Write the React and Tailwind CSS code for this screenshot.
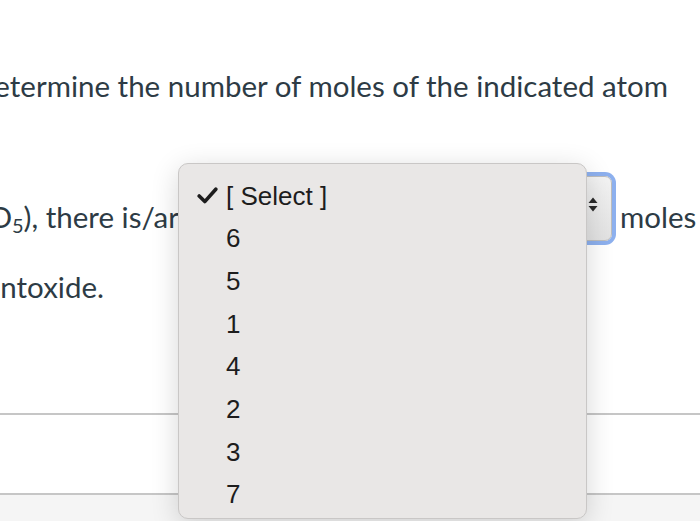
import React from "react";

const options = ["6", "5", "1", "4", "2", "3", "7"];

function Check() {
  return (
    <svg width="21" height="17" viewBox="0 0 21 17" className="block">
      <path d="M2.2 9 L7.8 14.6 L18.8 2.2" fill="none" stroke="#1d1d1d" strokeWidth="3.6" strokeLinecap="round" strokeLinejoin="round" />
    </svg>
  );
}

function Dropdown() {
  return (
    <div className="absolute left-[178px] top-[163px] w-[409px] h-[356px] bg-[#e9e7e6] border border-[#c9c7c6] rounded-[10px] shadow-[0_6px_28px_rgba(0,0,0,0.16)] pt-[10px] font-['Liberation_Sans',Arial,sans-serif] text-[26px] text-[#1d1d1d]">
      <div className="flex items-center h-[43px]">
        <div className="w-[47px] pl-[18px]">
          <Check />
        </div>
        <span>[ Select ]</span>
      </div>
      {options.map((o) => (
        <div key={o} className="flex items-center h-[42.7px]">
          <div className="w-[47px]" />
          <span>{o}</span>
        </div>
      ))}
    </div>
  );
}

export default function App() {
  return (
    <div className="relative w-[700px] h-[521px] overflow-hidden bg-white font-['Lato','Noto_Sans',sans-serif] text-[29.5px] leading-[40px] text-[#2d3b45]">
      <div className="pt-[66px]">
        <div className="w-[668px] flex justify-end overflow-hidden whitespace-nowrap">
          <span>Determine the number of moles of the indicated atom</span>
        </div>
      </div>

      <div className="flex items-start mt-[66px] h-[78px]">
        <div className="w-[194px] shrink-0 flex justify-end overflow-hidden whitespace-nowrap mt-[25px]">
          <span>
            pentoxide (P<sub className="text-[20px]">2</sub>O<sub className="text-[20px]">5</sub>), there is/are
          </span>
        </div>
        <div className="ml-[10px] mt-[4px] w-[408px] h-[65px] shrink-0 rounded-[7px] border border-[#bdbdbd] bg-gradient-to-b from-[#f3f3f3] to-[#e2e2e2] ring-4 ring-[#8db0ee] flex items-center justify-end pr-[13px]">
          <svg width="10" height="15" viewBox="0 0 10 15" className="mb-[8px]">
            <path d="M5 0.5 L9.5 6 H0.5 Z" fill="#2b2b2b" />
            <path d="M5 14.5 L9.5 9 H0.5 Z" fill="#2b2b2b" />
          </svg>
        </div>
        <span className="ml-[8px] mt-[25px]">moles</span>
      </div>

      <div className="mt-[17px] w-[104px] flex justify-end overflow-hidden whitespace-nowrap">
        <span>diphosphorus pentoxide.</span>
      </div>

      <div className="mt-[106px] border-t-2 border-[#c6c6c6] h-[80px]" />
      <div className="border-t-2 border-[#c6c6c6] bg-[#f5f5f5] h-[40px]" />

      <Dropdown />
    </div>
  );
}
